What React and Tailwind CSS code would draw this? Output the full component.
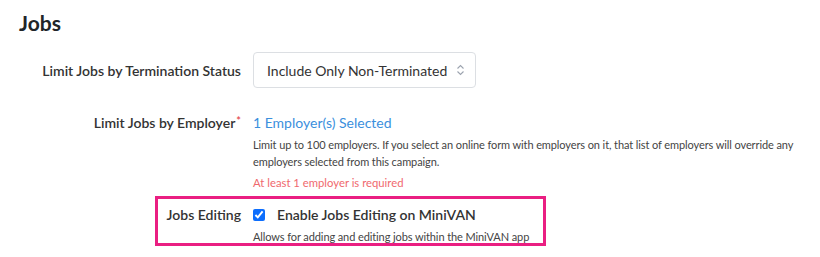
import React from "react";

const font = { fontFamily: "Lato, 'Noto Sans', sans-serif" };

const App = () => {
  return (
    <div className="w-[820px] h-[257px] bg-white text-[#212529] overflow-hidden" style={font}>
      <h2 className="pl-[19px] pt-[11px] text-[21px] font-bold leading-[24px]">Jobs</h2>

      <div className="flex items-center mt-[17px]">
        <div className="w-[241px] text-right text-[14px] font-semibold text-[#333]">Limit Jobs by Termination Status</div>
        <div className="ml-3 w-[223px] h-[36px] border border-[#dcdfe3] rounded-[4px] flex items-center justify-between pl-[13px] pr-[10px] text-[14px] text-[#333]">
          <span>Include Only Non-Terminated</span>
          <svg width="9" height="12" viewBox="0 0 9 12" fill="none" stroke="#9ca3af" strokeWidth="1.1">
            <path d="M1.5 4.5 L4.5 1.5 L7.5 4.5" />
            <path d="M1.5 7.5 L4.5 10.5 L7.5 7.5" />
          </svg>
        </div>
      </div>

      <div className="flex mt-[25px]">
        <div className="w-[241px] text-right text-[14px] font-semibold text-[#333] leading-[20px]">
          Limit Jobs by Employer<span className="text-[#e5484d] text-[11px] align-top relative -top-[2px] ml-[1px]">*</span>
        </div>
        <div className="ml-3">
          <div className="text-[14px] text-[#3b8fdd] leading-[20px]">1 Employer(s) Selected</div>
          <p className="mt-[3px] text-[11px] tracking-[-0.1px] leading-[17px] text-[#444] whitespace-nowrap">
            Limit up to 100 employers. If you select an online form with employers on it, that list of employers will override any
            <br />
            employers selected from this campaign.
          </p>
          <p className="mt-[4px] text-[11.3px] leading-[17px] text-[#f0696e]">At least 1 employer is required</p>
        </div>
      </div>

      <div className="ml-[155px] mt-[5px] w-[391px] h-[50px] border-[3px] border-[#ea1f82] pl-[7px] pt-[5px]">
        <div className="flex items-center">
          <div className="text-[14px] font-semibold text-[#333] w-[76px] text-right whitespace-nowrap">Jobs Editing</div>
          <input type="checkbox" defaultChecked className="ml-3 w-[12px] h-[12px] accent-[#0d6efd]" />
          <span className="ml-3 text-[14px] font-semibold text-[#333]">Enable Jobs Editing on MiniVAN</span>
        </div>
        <div className="ml-[88px] mt-[4px] text-[11px] tracking-[-0.1px] text-[#444] leading-[15px] whitespace-nowrap">Allows for adding and editing jobs within the MiniVAN app</div>
      </div>
    </div>
  );
};

export default App;
